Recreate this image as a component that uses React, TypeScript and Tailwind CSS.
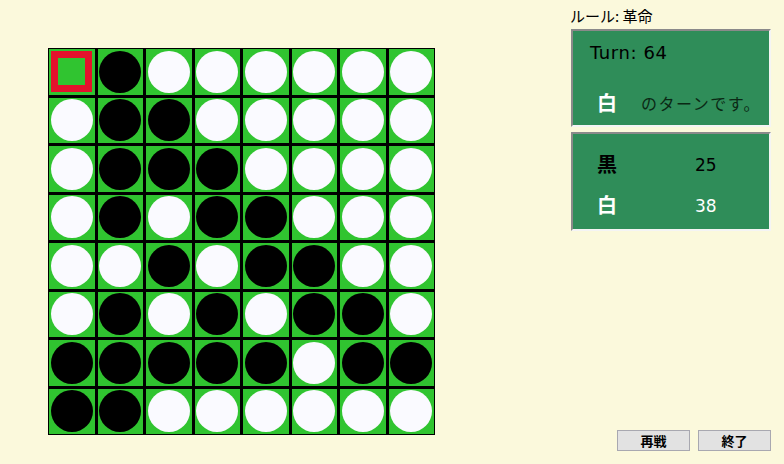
import React from 'react';

type Cell = 'B' | 'W' | '.';

const board: string[] = [
  '.BWWWWWW',
  'WBBWWWWW',
  'WBBBWWWW',
  'WBWBBWWW',
  'WWBWBBWW',
  'WBWBWBBW',
  'BBBBBWBB',
  'BBWWWWWW',
];

function Square({ cell, marked }: { cell: Cell; marked: boolean }) {
  return (
    <div className="flex items-center justify-center bg-[#30c430]">
      {cell === 'B' && <div className="w-[42px] h-[42px] rounded-full bg-black" />}
      {cell === 'W' && <div className="w-[42px] h-[42px] rounded-full bg-[#fafaff]" />}
      {marked && <div className="w-[41px] h-[41px] border-[7px] border-[#e4122c]" />}
    </div>
  );
}

function Panel({ children }: { children: React.ReactNode }) {
  return (
    <div className="bg-[#2f8d59] border-t-2 border-l-2 border-[#8a8a8a] border-r-2 border-b-2 border-r-[#f4f4f4] border-b-[#f4f4f4]">
      {children}
    </div>
  );
}

export default function App() {
  const cells = board.join('').split('') as Cell[];

  return (
    <div
      className="w-[784px] h-[464px] flex bg-[#fbf9dc] overflow-hidden"
      style={{ fontFamily: '"Noto Sans CJK JP", "DejaVu Sans", sans-serif' }}
    >
      <div className="pl-[48px] pt-[48px]">
        <div className="w-[387px] h-[387px] grid grid-cols-8 grid-rows-8 gap-[3px] p-[1px] bg-black">
          {cells.map((c, i) => (
            <Square key={i} cell={c} marked={i === 0} />
          ))}
        </div>
      </div>

      <div className="ml-[136px] w-[200px] flex flex-col pt-[6px] pb-[13px]">
        <div className="text-[15px] leading-[20px] text-black -ml-[1px]">ルール: 革命</div>

        <div className="mt-[3px]">
          <Panel>
            <div className="h-[94px] flex flex-col">
              <div
                className="pl-[17px] pt-[11px] text-[18px] leading-[22px] tracking-[0.6px] text-black"
                style={{ fontFamily: '"DejaVu Sans", sans-serif' }}
              >
                Turn: 64
              </div>
              <div className="flex items-center pl-[24px] mt-[27px]">
                <span className="text-[20px] font-bold text-white leading-[24px] w-[44px]">白</span>
                <span className="text-[16px] leading-[22px] text-[#0a2814] tracking-[1.5px]">のターンです。</span>
              </div>
            </div>
          </Panel>
        </div>

        <div className="mt-[5px]">
          <Panel>
            <div className="h-[95px] flex flex-col pl-[24px] pt-[18px] gap-[17px]">
              <div className="flex items-end">
                <span className="text-[20px] font-bold text-black leading-[24px] w-[98px]">黒</span>
                <span
                  className="text-[17px] leading-[22px] text-black"
                  style={{ fontFamily: '"DejaVu Sans", sans-serif' }}
                >
                  25
                </span>
              </div>
              <div className="flex items-end">
                <span className="text-[20px] font-bold text-white leading-[24px] w-[98px]">白</span>
                <span
                  className="text-[17px] leading-[22px] text-white"
                  style={{ fontFamily: '"DejaVu Sans", sans-serif' }}
                >
                  38
                </span>
              </div>
            </div>
          </Panel>
        </div>

        <div className="mt-auto flex gap-[8px] pl-[46px]">
          <button className="w-[73px] h-[21px] bg-[#e2e2e2] border border-[#a8a8b0] text-[13px] leading-[19px] text-black font-bold">
            再戦
          </button>
          <button className="w-[73px] h-[21px] bg-[#e2e2e2] border border-[#a8a8b0] text-[13px] leading-[19px] text-black font-bold">
            終了
          </button>
        </div>
      </div>
    </div>
  );
}
